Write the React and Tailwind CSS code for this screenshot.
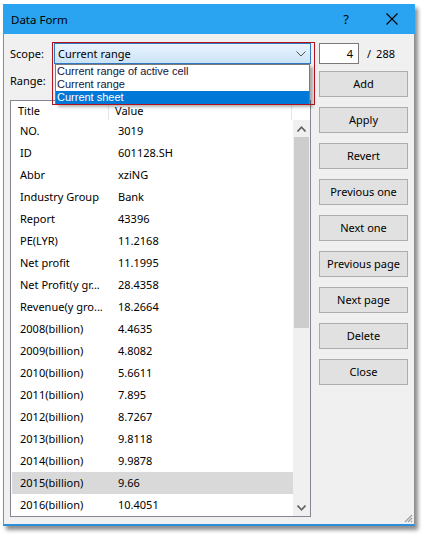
import React from "react";

const rows = [
  ["NO.", "3019"],
  ["ID", "601128.SH"],
  ["Abbr", "xziNG"],
  ["Industry Group", "Bank"],
  ["Report", "43396"],
  ["PE(LYR)", "11.2168"],
  ["Net profit", "11.1995"],
  ["Net Profit(y gr...", "28.4358"],
  ["Revenue(y gro...", "18.2664"],
  ["2008(billion)", "4.4635"],
  ["2009(billion)", "4.8082"],
  ["2010(billion)", "5.6611"],
  ["2011(billion)", "7.895"],
  ["2012(billion)", "8.7267"],
  ["2013(billion)", "9.8118"],
  ["2014(billion)", "9.9878"],
  ["2015(billion)", "9.66"],
  ["2016(billion)", "10.4051"],
];

const buttons = [
  "Add",
  "Apply",
  "Revert",
  "Previous one",
  "Next one",
  "Previous page",
  "Next page",
  "Delete",
  "Close",
];

export default function App() {
  return (
    <div
      className="w-[424px] h-[537px] bg-white overflow-hidden text-[11px] leading-[14px] text-black"
      style={{ fontFamily: '"Noto Sans", "Open Sans", sans-serif' }}
    >
      <div className="ml-[3px] mt-[4px] w-[412px] h-[522px] flex flex-col bg-[#f0f0f0] shadow-[3px_4px_4px_rgba(0,0,0,0.45)]">
        {/* Title bar */}
        <div className="h-[30px] bg-[#2aa3f0] flex items-center pl-[8px] shrink-0">
          <span className="text-[11.5px] text-black mt-[2px]">Data Form</span>
          <span className="ml-auto mr-[37px] text-[13px]">?</span>
          <svg width="12" height="12" viewBox="0 0 12 12" className="mr-[17px]">
            <path d="M0.5 0.5 L11.5 11.5 M11.5 0.5 L0.5 11.5" stroke="#000" strokeWidth="1.1" />
          </svg>
        </div>
        {/* Body */}
        <div className="flex-1 flex border-x border-[#8f8f8f] border-b-2 border-b-[#2b8fdc] pl-[6px] pt-[9px] pr-[5px] relative">
          {/* Left column */}
          <div className="w-[301px] flex flex-col">
            <div className="h-[21px] flex items-center relative">
              <span>Scope:</span>
              <div className="absolute left-[44px] top-0 w-[257px] h-[21px]">
                {/* combo */}
                <div className="h-[21px] border border-[#2f78c0] bg-gradient-to-b from-[#eaf4fd] to-[#cbe3f7] flex items-center pl-[3px] pr-[4px]">
                  <span>Current range</span>
                  <svg width="10" height="6" viewBox="0 0 10 6" className="ml-auto">
                    <path d="M0.5 0.5 L5 5 L9.5 0.5" stroke="#555" strokeWidth="1" fill="none" />
                  </svg>
                </div>
                {/* dropdown list */}
                <div
                  className="absolute left-[1px] top-[21px] w-[255px] h-[40px] bg-white border border-[#7a7a7a] shadow-[3px_3px_3px_rgba(0,0,0,0.3)] flex flex-col z-10 text-[11px]"
                  style={{ fontFamily: '"Liberation Sans", Arial, sans-serif' }}
                >
                  <div className="h-[13px] leading-[13px] pl-[1px] text-[#14143c]">Current range of active cell</div>
                  <div className="h-[13px] leading-[13px] pl-[1px] text-[#14143c]">Current range</div>
                  <div className="h-[13px] leading-[13px] pl-[1px] bg-[#0078d7] text-white">Current sheet</div>
                </div>
                {/* red frame */}
                <div className="absolute -left-[2px] -top-[1px] w-[263px] h-[63px] border-[1.5px] border-[#b3121c] z-20 pointer-events-none" />
              </div>
            </div>
            <div className="mt-[7px] h-[20px] flex items-center">
              <span>Range:</span>
            </div>
            {/* list box */}
            <div className="mt-[9px] h-[417px] border border-[#828790] bg-white flex flex-col">
              <div className="h-[19px] flex items-center shrink-0">
                <div className="w-[98px] h-full flex items-center pl-[7px] border-r border-[#e5e5e5]">Title</div>
                <div className="w-[183px] h-full flex items-center pl-[6px] border-r border-[#e5e5e5]">Value</div>
                <div className="flex-1" />
              </div>
              <div className="flex-1 flex">
                <div className="flex-1 flex flex-col">
                  {rows.map(([t, v], i) => (
                    <div
                      key={t}
                      className={`h-[22px] flex items-center ml-[1px] ${i === 16 ? "bg-[#d9d9d9]" : ""}`}
                    >
                      <div className="w-[98px] pl-[8px] whitespace-nowrap">{t}</div>
                      <div className="pl-[8px] whitespace-nowrap">{v}</div>
                    </div>
                  ))}
                </div>
                <div className="w-[17px] bg-[#f0f0f0] flex flex-col">
                  <div className="h-[17px] flex items-center justify-center">
                    <svg width="9" height="6" viewBox="0 0 9 6">
                      <path d="M0.5 5.5 L4.5 1.2 L8.5 5.5" stroke="#606060" strokeWidth="1.6" fill="none" />
                    </svg>
                  </div>
                  <div className="mx-[1px] h-[191px] bg-[#cdcdcd]" />
                  <div className="flex-1" />
                  <div className="h-[17px] flex items-center justify-center">
                    <svg width="9" height="6" viewBox="0 0 9 6">
                      <path d="M0.5 0.5 L4.5 4.8 L8.5 0.5" stroke="#606060" strokeWidth="1.6" fill="none" />
                    </svg>
                  </div>
                </div>
              </div>
            </div>
          </div>
          {/* Right column */}
          <div className="ml-[8px] w-[89px] flex flex-col">
            <div className="h-[21px] flex items-center">
              <div className="w-[40px] h-[21px] border border-[#7a7a7a] bg-white flex items-center justify-end pr-[5px]">4</div>
              <span className="ml-[8px]">/</span>
              <span className="ml-[5px]">288</span>
            </div>
            <div className="mt-[7px] flex flex-col gap-[10px]">
              {buttons.map((b) => (
                <div
                  key={b}
                  className="h-[26px] border border-[#adadad] bg-[#e1e1e1] flex items-center justify-center"
                >
                  {b}
                </div>
              ))}
            </div>
          </div>
          {/* resize grip */}
          <svg width="9" height="9" viewBox="0 0 9 9" className="absolute right-[1px] bottom-[1px]">
            <path d="M8 1 L1 8 M8 4 L4 8 M8 7 L7 8" stroke="#a0a0a0" strokeWidth="1.2" />
          </svg>
        </div>
      </div>
    </div>
  );
}
